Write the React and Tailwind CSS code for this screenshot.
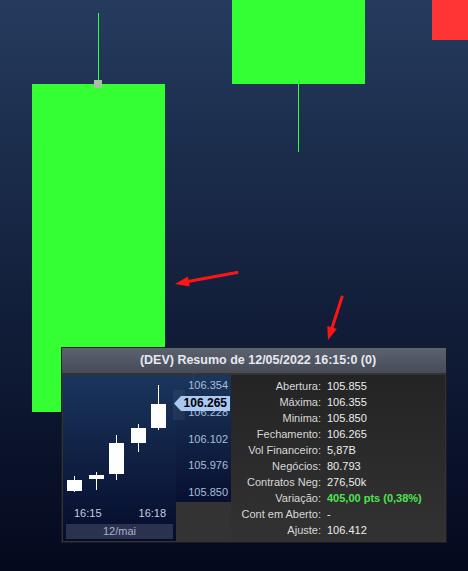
import React from "react";

const rows = [
  ["Abertura:", "105.855"],
  ["Máxima:", "106.355"],
  ["Minima:", "105.850"],
  ["Fechamento:", "106.265"],
  ["Vol Financeiro:", "5,87B"],
  ["Negócios:", "80.793"],
  ["Contratos Neg:", "276,50k"],
  ["Variação:", "405,00 pts (0,38%)", true],
  ["Cont em Aberto:", "-"],
  ["Ajuste:", "106.412"],
];

// x, body top, body bottom, wick top, wick bottom (plot coords)
const candles = [
  [4, 105, 116, 101, 117],
  [26, 100, 104, 97, 115],
  [46, 68, 99, 60, 105],
  [68, 53, 68, 49, 77],
  [88, 29, 53, 10, 55],
];

const prices = ["106.354", "106.228", "106.102", "105.976", "105.850"];

function MiniChart() {
  return (
    <div className="flex w-[168px] h-full">
      <div className="flex flex-col w-[113px] h-full bg-gradient-to-b from-[#1b365d] to-[#060c2c]">
        <svg width="113" height="127" shapeRendering="crispEdges">
          {candles.map(([x, bt, bb, wt, wb], i) => (
            <g key={i} fill="#ffffff">
              <rect x={x + 7} y={wt} width="1" height={wb - wt} />
              <rect x={x} y={bt} width="15" height={bb - bt} />
            </g>
          ))}
        </svg>
        <div className="flex h-[22px] gap-[37px] pl-[11px] pt-[3px] text-[11px] leading-[16px] text-[#c8cfdc]">
          <span>16:15</span>
          <span>16:18</span>
        </div>
        <div className="mx-[3px] h-[15px] bg-[#2b3250] text-center text-[11px] leading-[15px] text-[#aab2c4]">
          12/mai
        </div>
      </div>
      <div className="flex flex-col w-[55px] h-full">
        <div className="relative h-[127px] flex flex-col justify-between items-end py-[3px] pr-[3px] bg-gradient-to-b from-[#1b365d] to-[#081030] text-[11px] leading-[14px] text-[#a9bfd9]">
          <div className="absolute left-[-3px] top-[15px] w-[12px] h-[30px] bg-white/5" />
          <div className="absolute left-[17px] top-[-2px] w-px h-[17px] bg-white/5" />
          {prices.map((p) => (
            <span key={p}>{p}</span>
          ))}
          <div className="absolute left-[-2px] top-[21px] w-[56px] h-[15px]">
            <svg className="absolute inset-0" width="56" height="15">
              <polygon points="0,7.5 7,0 56,0 56,15 7,15" fill="#a9c9f2" />
            </svg>
            <span className="absolute right-[3px] top-0 text-[12px] font-bold leading-[15px] text-black">
              106.265
            </span>
          </div>
        </div>
        <div className="flex-1 bg-[#333333]" />
      </div>
    </div>
  );
}

export default function App() {
  return (
    <div className="relative w-[468px] h-[571px] overflow-hidden bg-gradient-to-b from-[#253b5e] to-[#05091e] font-['Liberation_Sans',Arial,sans-serif]">
      {/* main chart candles */}
      <div className="absolute left-[98px] top-[13px] w-px h-[71px] bg-[#33ff33]" />
      <div className="absolute left-[32px] top-[84px] w-[133px] h-[328px] bg-[#33ff33]" />
      <div className="absolute left-[94px] top-[80px] w-2 h-2 bg-[#a3c2a3]" />
      <div className="absolute left-[232px] top-0 w-[133px] h-[84px] bg-[#33ff33]" />
      <div className="absolute left-[298px] top-[84px] w-px h-[68px] bg-[#33ff33]" />
      <div className="absolute left-[432px] top-0 w-[36px] h-[40px] bg-[#ff3434]" />

      {/* tooltip */}
      <div className="absolute left-[61px] top-[347px] w-[386px] h-[196px] flex flex-col border border-[#1c1c1c] bg-[#333333]">
        <div className="h-[25px] flex items-center justify-center pl-[8px] bg-gradient-to-b from-[#5d6271] to-[#464b57] text-[12.5px] font-bold text-[#e6e8f0]">
          (DEV) Resumo de 12/05/2022 16:15:0 (0)
        </div>
        <div className="flex flex-1 pt-[2px] pl-px pb-px">
          <MiniChart />
          <div className="flex-1 mr-px pt-[3px] bg-gradient-to-b from-[#242424] to-[#323232] text-[11px]">
            {rows.map(([label, value, green]) => (
              <div key={label} className="flex h-[16px] leading-[16px]">
                <span className="w-[90px] text-right text-[#d8d8d8]">{label}</span>
                <span className={green ? "pl-[6px] font-bold text-[#4ee44e]" : "pl-[6px] text-[#ececec]"}>
                  {value}
                </span>
              </div>
            ))}
          </div>
        </div>
      </div>

      {/* annotation arrows */}
      <svg className="absolute inset-0 pointer-events-none" width="468" height="571">
        <line x1="237" y1="272.5" x2="188" y2="281.5" stroke="#ff1414" strokeWidth="3" strokeLinecap="round" />
        <polygon points="175,284 187.9,276.6 189.7,286.4" fill="#ff1414" />
        <line x1="342" y1="297" x2="332" y2="328" stroke="#ff1414" strokeWidth="3" strokeLinecap="round" />
        <polygon points="328,340 327.3,326 336.8,329.1" fill="#ff1414" />
      </svg>
    </div>
  );
}
